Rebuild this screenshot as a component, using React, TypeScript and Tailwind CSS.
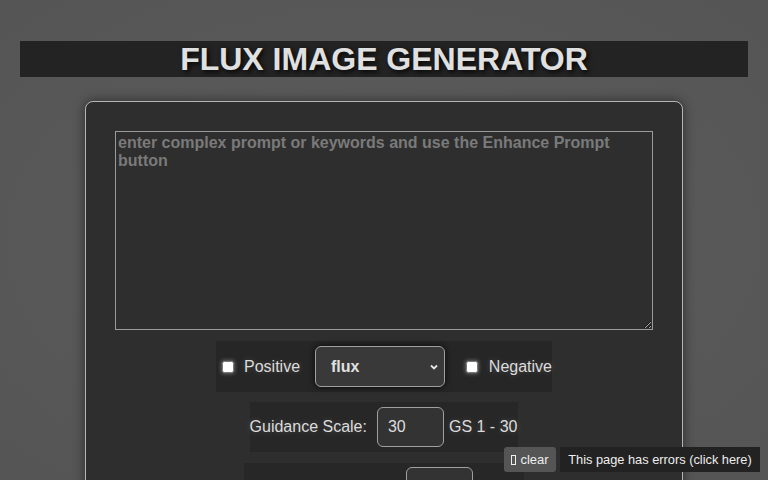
import React from "react";

const font = { fontFamily: '"Liberation Sans", Arial, sans-serif' };

function Chevron() {
  return (
    <svg width="10" height="10" viewBox="0 0 10 10" className="absolute right-[6px] top-1/2 -translate-y-1/2">
      <path d="M2 3.5 L5 6.5 L8 3.5" fill="none" stroke="#e5e5e5" strokeWidth="1.8" />
    </svg>
  );
}

export default function App() {
  return (
    <div
      className="h-[480px] w-full overflow-hidden bg-[radial-gradient(ellipse_at_center,#5c5c5c_0%,#555555_100%)] pt-[41px]"
      style={font}
    >
      <div className="mx-[20px] flex h-[36px] items-center justify-center bg-[#232323]">
        <h1 className="text-[32px] font-bold leading-none text-[#e0e0e0] [text-shadow:2px_2px_5px_rgba(0,0,0,0.9)]">
          FLUX IMAGE GENERATOR
        </h1>
      </div>

      <div className="mx-auto mt-[24px] w-[598px] rounded-[8px] border border-[#b5b5b5] bg-[#2e2e2e] px-[29px] pt-[29px] pb-[40px] shadow-[0_0_12px_rgba(0,0,0,0.5)]">
        <textarea
          className="block h-[199px] w-full resize-y border border-[#9a9a9a] bg-transparent px-[2px] pt-[2px] text-[16px] font-bold leading-[18px] text-[#ddd] placeholder:text-[#7a7a7a] outline-none"
          placeholder="enter complex prompt or keywords and use the Enhance Prompt button"
        />

        <div className="mt-[11px] flex justify-center">
          <div className="flex h-[51px] w-[336px] items-center bg-[#262626] pl-[6px]">
            <label className="flex items-center gap-[10px] text-[16px] text-[#dcdcdc] [text-shadow:0_0_6px_rgba(255,255,255,0.2)]">
              <input type="checkbox" className="h-[12px] w-[12px] shadow-[0_0_4px_rgba(255,255,255,0.45)]" />
              Positive
            </label>
            <div className="relative ml-[15px] h-[41px] w-[132px]">
              <select className="h-full w-full appearance-none rounded-[6px] border border-[#a0a0a0] bg-[#393939] pl-[15px] text-[16px] font-bold text-[#e0e0e0] shadow-[0_0_6px_rgba(0,0,0,0.8)] outline-none">
                <option>flux</option>
              </select>
              <Chevron />
            </div>
            <label className="ml-[21px] flex items-center gap-[11px] text-[16px] text-[#dcdcdc] [text-shadow:0_0_6px_rgba(255,255,255,0.2)]">
              <input type="checkbox" className="h-[12px] w-[12px] shadow-[0_0_4px_rgba(255,255,255,0.45)]" />
              Negative
            </label>
          </div>
        </div>

        <div className="mt-[10px] flex justify-center">
          <div className="flex h-[50px] items-center bg-[#272727] pr-[1px]">
            <span className="text-[16px] text-[#dcdcdc] [text-shadow:0_0_6px_rgba(255,255,255,0.2)]">Guidance Scale:</span>
            <input
              defaultValue="30"
              className="ml-[10px] h-[40px] w-[67px] rounded-[6px] border border-[#a0a0a0] bg-[#333] pl-[10px] text-[16px] text-[#ddd] outline-none"
            />
            <span className="ml-[5px] text-[16px] text-[#dcdcdc] [text-shadow:0_0_6px_rgba(255,255,255,0.2)]">GS 1 - 30</span>
          </div>
        </div>

        <div className="mt-[11px] flex justify-center">
          <div className="flex h-[50px] w-[280px] items-start justify-end bg-[#272727] pt-[4px] pr-[51px]">
            <input
              defaultValue=""
              className="h-[40px] w-[67px] rounded-[6px] border border-[#a0a0a0] bg-[#333] text-[16px] text-[#ddd] outline-none"
            />
          </div>
        </div>
      </div>

      <div className="fixed right-[8px] top-[447px] flex h-[25px] items-stretch gap-[4px] text-[13px]">
        <button className="flex w-[52px] items-center justify-center gap-[4px] rounded-[3px] bg-[#555] text-[#eee]">
          <span className="inline-block h-[10px] w-[5px] border border-[#eee]" />
          clear
        </button>
        <div className="flex w-[200px] items-center justify-center bg-[#222] text-[12.8px] text-[#eee]">
          This page has errors (click here)
        </div>
      </div>
    </div>
  );
}
